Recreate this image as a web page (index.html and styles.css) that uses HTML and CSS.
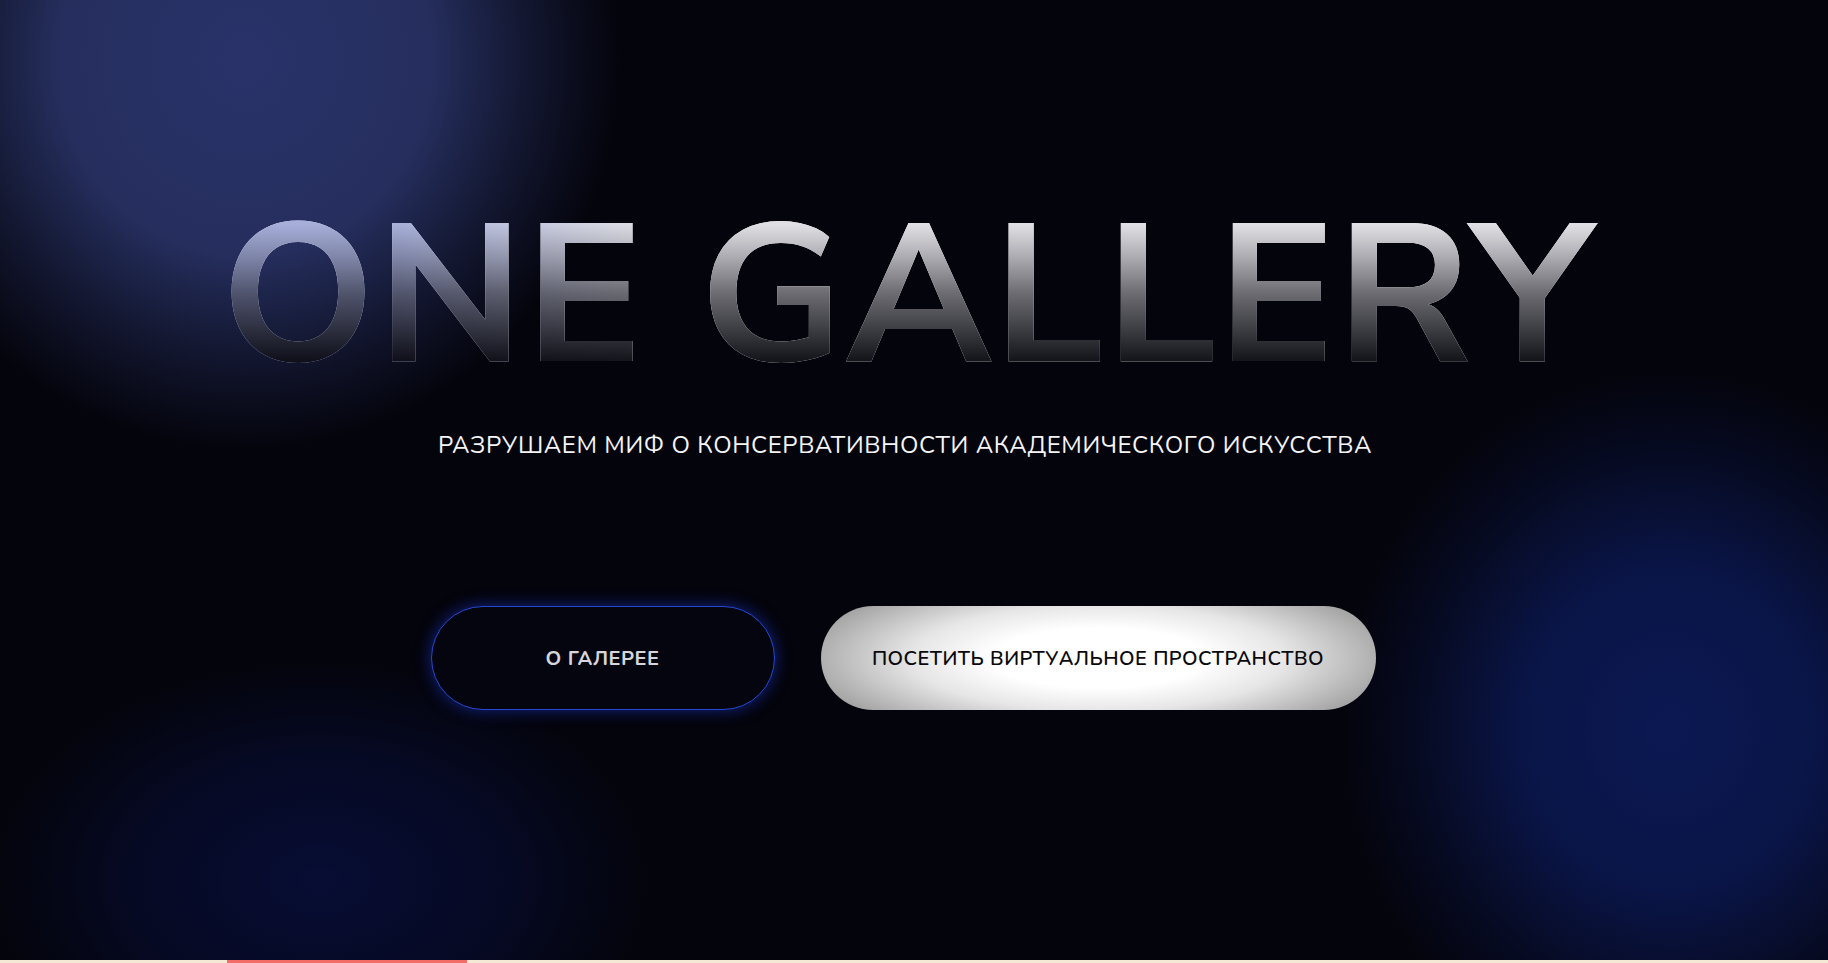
FILE: index.html
```html
<!DOCTYPE html>
<html lang="ru">
<head>
  <meta charset="UTF-8" />
  <meta name="viewport" content="width=device-width, initial-scale=1.0" />
  <title>One Gallery</title>
  <link rel="stylesheet" href="styles.css">
</head>
<body>
  <section class="hero">
    <h1 class="hero-title">ONE GALLERY</h1>
    <p class="hero-subtitle">РАЗРУШАЕМ МИФ О КОНСЕРВАТИВНОСТИ АКАДЕМИЧЕСКОГО ИСКУССТВА</p>
    <div class="hero-actions">
      <a class="btn btn-outline" href="#about">О ГАЛЕРЕЕ</a>
      <a class="btn btn-light" href="#space">ПОСЕТИТЬ ВИРТУАЛЬНОЕ ПРОСТРАНСТВО</a>
    </div>
  </section>

  <section id="about" class="about">
    <div class="about-tabs">
      <span class="about-tab"></span>
    </div>
  </section>
</body>
</html>
```

FILE: styles.css
```css
html {
  background: #f3e9d4;
}
body {
  margin: 0;
  font-family: "Nunito", Lato, "Noto Sans", sans-serif;
}
::-webkit-scrollbar {
  width: 2px;
}
::-webkit-scrollbar-track {
  background: #ececec;
}
::-webkit-scrollbar-thumb {
  background: #c4c4c4;
}

.hero {
  height: 960px;
  box-sizing: border-box;
  padding-top: 199px;
  display: flex;
  flex-direction: column;
  align-items: center;
  background:
    radial-gradient(ellipse 375px 390px at 245px 60px, #29336a 0%, #252e5d 50%, rgba(37, 46, 93, 0.45) 75%, rgba(37, 46, 93, 0) 100%),
    radial-gradient(ellipse 330px 360px at 1670px 730px, #0b1852 0%, #0a1547 45%, rgba(10, 21, 71, 0.4) 75%, rgba(10, 21, 71, 0) 100%),
    radial-gradient(ellipse 330px 220px at 320px 880px, #070d34 0%, rgba(7, 13, 52, 0.6) 55%, rgba(7, 13, 52, 0) 100%),
    #04040c;
}

.hero-title {
  margin: 0;
  padding-right: 12px;
  font-family: "Nunito Sans", Lato, "Noto Sans", sans-serif;
  font-size: 196px;
  font-weight: 700;
  line-height: 1;
  letter-spacing: 2px;
  background:
    linear-gradient(to bottom, #e0e0e4 13%, #aaaab0 30%, #6c6c72 48%, #15151c 82%),
    linear-gradient(to right, #bcc6f4 0%, #bfc8f2 13%, #ffffff 31%);
  background-blend-mode: multiply;
  -webkit-background-clip: text;
  background-clip: text;
  color: transparent;
}

.hero-subtitle {
  margin: 34px 0 0;
  padding-right: 18px;
  color: #f4f4f6;
  font-size: 24px;
  font-weight: 400;
  letter-spacing: 0.6px;
}

.hero-actions {
  display: flex;
  gap: 46px;
  margin-top: 145px;
  padding-right: 22px;
}

.btn {
  display: flex;
  align-items: center;
  justify-content: center;
  height: 104px;
  box-sizing: border-box;
  border-radius: 52px;
  font-size: 20px;
  text-decoration: none;
  letter-spacing: 0.5px;
}
.btn-outline {
  width: 344px;
  background: #05050f;
  border: 1px solid #2548d0;
  box-shadow: 0 0 16px rgba(28, 60, 230, 0.55);
  color: #d6d6da;
  font-weight: 700;
}
.btn-light {
  width: 555px;
  background: radial-gradient(ellipse 56% 85% at center, #ffffff 34%, #e6e6e6 60%, #9c9c9c 100%);
  color: #0a0a0e;
  font-weight: 600;
}

.about {
  min-height: 1200px;
  background: #f3e9d4;
}
.about-tabs {
  display: flex;
  padding-left: 227px;
}
.about-tab {
  width: 240px;
  height: 40px;
  background: #f26d68;
}
```
